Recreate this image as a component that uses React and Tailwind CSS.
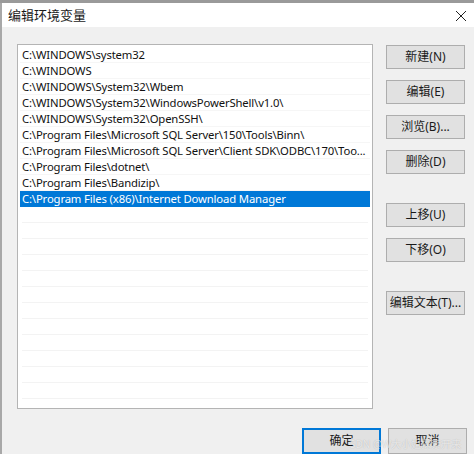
import React from 'react';

const paths = [
  'C:\\WINDOWS\\system32',
  'C:\\WINDOWS',
  'C:\\WINDOWS\\System32\\Wbem',
  'C:\\WINDOWS\\System32\\WindowsPowerShell\\v1.0\\',
  'C:\\WINDOWS\\System32\\OpenSSH\\',
  'C:\\Program Files\\Microsoft SQL Server\\150\\Tools\\Binn\\',
  'C:\\Program Files\\Microsoft SQL Server\\Client SDK\\ODBC\\170\\Too...',
  'C:\\Program Files\\dotnet\\',
  'C:\\Program Files\\Bandizip\\',
  'C:\\Program Files (x86)\\Internet Download Manager',
];

const SELECTED = 9;
const EMPTY_ROWS = 13;

const font = { fontFamily: '"Noto Sans", "Noto Sans CJK SC", sans-serif' };

const Button = ({ children, primary, className = '' }) => (
  <div
    className={`w-[79px] h-[24px] flex items-center justify-center text-[12px] text-[#1a1a1a] bg-[#e1e1e1] ${
      primary ? 'border-2 border-[#0078d7]' : 'border border-[#adadad]'
    } ${className}`}
  >
    {children}
  </div>
);

export default function App() {
  return (
    <div className="w-[474px] h-[454px] overflow-hidden bg-[#f0f0f0] relative" style={font}>
      {/* window frame edge */}
      <div className="h-[3px] bg-[#9a9a9a]" />
      <div className="flex h-[451px]">
        <div className="w-[2px] bg-[#a8a8a8]" />
        <div className="flex-1 flex flex-col">
          {/* title bar */}
          <div className="h-[28px] bg-white flex items-center justify-between pl-[6px] pr-[6px] pt-[2px]">
            <span className="text-[13px] text-[#1a1a1a]">编辑环境变量</span>
            <svg width="12" height="12" viewBox="0 0 12 12" className="mr-[1px]">
              <path d="M1 1 L11 11 M11 1 L1 11" stroke="#222" strokeWidth="1" />
            </svg>
          </div>

          {/* body */}
          <div className="flex-1 flex flex-col pl-[15px] pt-[17px]">
            <div className="flex gap-[13px]">
              <div className="w-[356px] h-[365px] bg-white border border-[#b4b4b4] pt-[2px] px-[2px] overflow-hidden">
                {paths.map((p, i) => (
                  <div
                    key={p}
                    className={`h-[16px] leading-[16px] text-[11.3px] tracking-[-0.15px] pl-[2px] whitespace-nowrap overflow-hidden ${
                      i === SELECTED ? 'bg-[#0078d7] text-white' : 'text-[#111] border-b border-[#f6f6f6]'
                    }`}
                  >
                    {p}
                  </div>
                ))}
                {Array.from({ length: EMPTY_ROWS }).map((_, i) => (
                  <div key={i} className="h-[16px] border-b border-[#f3f3f3] mx-[2px]" />
                ))}
              </div>

              <div className="flex flex-col pt-[1px]">
                <Button>新建(N)</Button>
                <Button className="mt-[11px]">编辑(E)</Button>
                <Button className="mt-[11px]">浏览(B)...</Button>
                <Button className="mt-[11px]">删除(D)</Button>
                <Button className="mt-[29px]">上移(U)</Button>
                <Button className="mt-[11px]">下移(O)</Button>
                <Button className="mt-[29px]">编辑文本(T)...</Button>
              </div>
            </div>

            <div className="flex justify-end gap-[7px] mt-[19px] pr-[7px]">
              <Button primary className="h-[26px]">确定</Button>
              <Button className="h-[26px]">取消</Button>
            </div>
          </div>
        </div>
      </div>

      {/* watermark */}
      <span className="absolute left-[350px] top-[437px] text-[10px] text-white/70 whitespace-nowrap [text-shadow:0_0_1px_rgba(0,0,0,0.25)]">
        SDN @W大小姐探索开来
      </span>
    </div>
  );
}
